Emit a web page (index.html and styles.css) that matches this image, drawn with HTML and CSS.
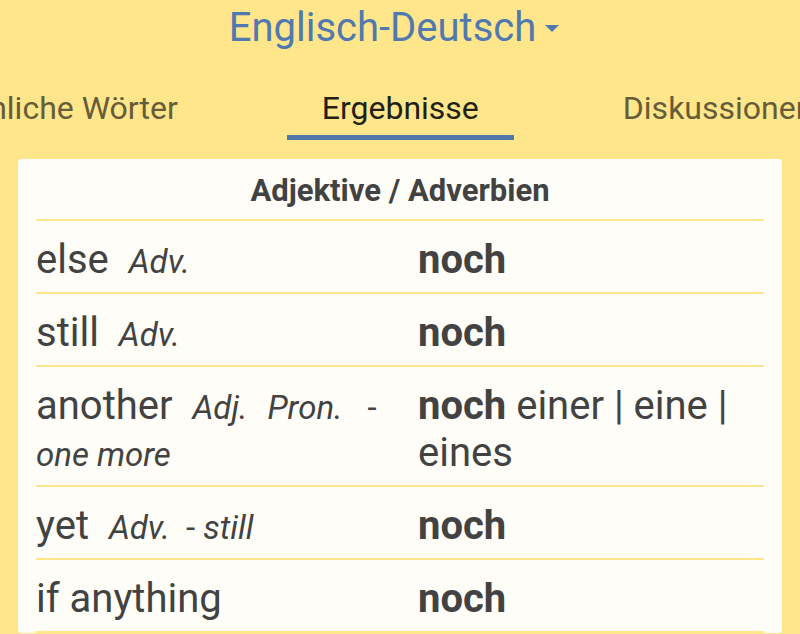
FILE: index.html
```html
<!DOCTYPE html>
<html lang="de">
<head>
<meta charset="utf-8">
<title>Englisch-Deutsch</title>
<link rel="stylesheet" href="styles.css">
</head>
<body>
<header class="topbar">
  <div class="title">Englisch-Deutsch<span class="caret"></span></div>
</header>
<nav class="tabs">
  <div class="tab">Ähnliche Wörter</div>
  <div class="tab active">Ergebnisse</div>
  <div class="tab">Diskussionen</div>
</nav>
<main class="card">
  <div class="card-head">Adjektive / Adverbien</div>
  <div class="row">
    <div class="en">else <span class="lbl">Adv.</span></div>
    <div class="de"><b>noch</b></div>
  </div>
  <div class="row">
    <div class="en">still <span class="lbl">Adv.</span></div>
    <div class="de"><b>noch</b></div>
  </div>
  <div class="row">
    <div class="en">another <span class="lbl">Adj.</span> <span class="lbl">Pron.</span> <span class="dash">-</span> <span class="note">one more</span></div>
    <div class="de"><b>noch</b> einer | eine | eines</div>
  </div>
  <div class="row">
    <div class="en">yet <span class="lbl">Adv.</span> <span class="dash short">- </span><span class="note">still</span></div>
    <div class="de"><b>noch</b></div>
  </div>
  <div class="row">
    <div class="en">if anything</div>
    <div class="de"><b>noch</b></div>
  </div>
</main>
</body>
</html>
```
FILE: styles.css
```css
html, body {
  margin: 0;
  padding: 0;
}
body {
  background: #ffe68b;
  font-family: Roboto, "Liberation Sans", sans-serif;
  color: #424242;
  height: 634px;
  overflow: hidden;
}
.topbar {
  display: flex;
  justify-content: center;
  padding-top: 4px;
}
.title {
  font-size: 40px;
  line-height: 47px;
  color: #5079b0;
  display: flex;
  align-items: center;
  padding-right: 12px;
}
.caret {
  width: 0;
  height: 0;
  border-left: 7px solid transparent;
  border-right: 7px solid transparent;
  border-top: 7px solid #5079b0;
  margin-left: 9px;
  margin-top: 2px;
}
.tabs {
  display: flex;
  justify-content: center;
  margin-top: 39px;
  margin-left: -36px;
  gap: 74px;
  white-space: nowrap;
}
.tab {
  flex: none;
  font-size: 32px;
  color: #665c38;
  padding: 0 35px 8px;
  border-bottom: 5px solid transparent;
  line-height: 37px;
}
.tab.active {
  color: #221f14;
  border-bottom-color: #5077aa;
}
.card {
  margin: 19px 18px 0;
  background: #fffdf7;
  border-radius: 4px;
  padding: 0 18px;
}
.card-head {
  text-align: center;
  font-weight: 700;
  font-size: 31px;
  padding: 14px 0 10px;
  line-height: 36px;
  border-bottom: 2px solid #ffe68b;
}
.row {
  display: grid;
  grid-template-columns: 1fr 1fr;
  font-size: 40px;
  line-height: 47px;
  padding: 15px 0 9px;
  border-bottom: 2px solid #ffe68b;
}
.de {
  padding-left: 18px;
}
.de b {
  font-weight: 700;
}
.lbl, .note, .dash {
  font-size: 33px;
  line-height: 1;
}
.lbl, .note {
  font-style: italic;
}
.lbl {
  margin-left: 10px;
}
.dash {
  margin-left: 15px;
}
.dash.short {
  margin-left: 6px;
}
```
